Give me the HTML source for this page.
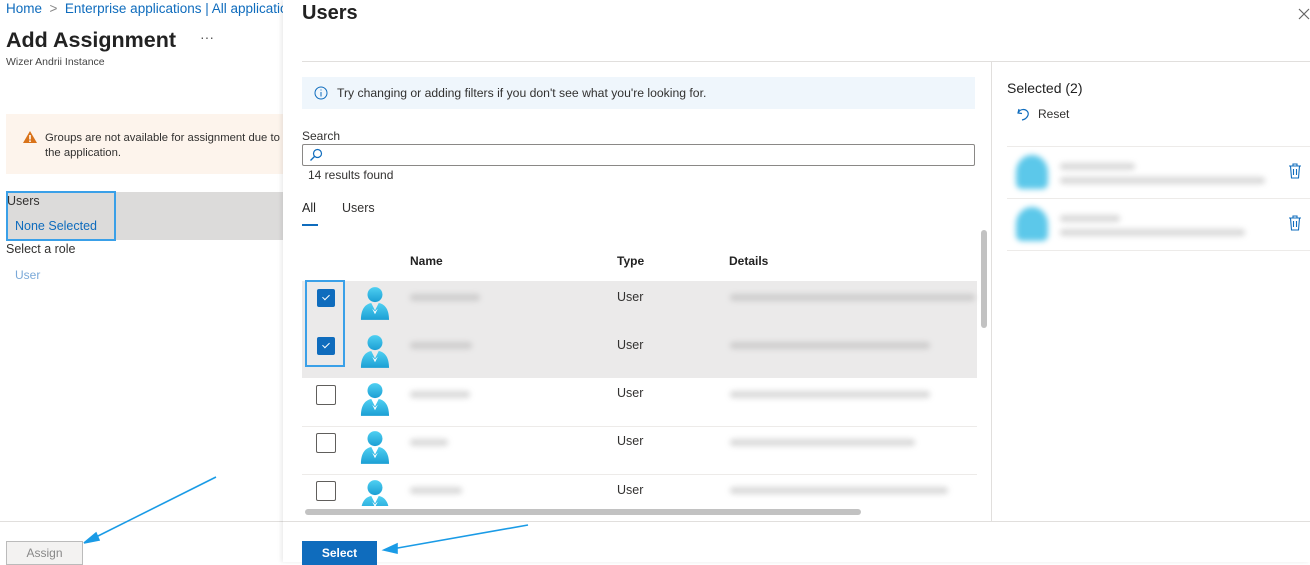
<!DOCTYPE html>
<html><head><meta charset="utf-8"><style>
*{box-sizing:border-box;margin:0;padding:0}
body{width:1310px;height:562px;overflow:hidden;background:#fff;font-family:"Liberation Sans",sans-serif;color:#323130;position:relative;font-size:12.5px}
.a{position:absolute}
.blur{position:absolute;background:#aaa;filter:blur(3px);height:7px;border-radius:3px;opacity:.45}
.cb{position:absolute;width:20px;height:20px;border:1px solid #605e5c;border-radius:2px;background:#fff}
.cb.on{background:#0f6cbd;border-color:#0f6cbd;width:18px;height:18px}
.cb.on:after{content:"";position:absolute;left:6px;top:3px;width:3px;height:6px;border:solid #fff;border-width:0 1.5px 1.5px 0;transform:rotate(45deg)}
.ty{position:absolute;left:617px;font-size:12.5px}
</style></head><body>
<div class="a" style="left:6px;top:1px;font-size:13.5px;color:#0f6cbd;white-space:nowrap">Home &nbsp;<span style="color:#888">&gt;</span>&nbsp; Enterprise applications | All applications</div>
<div class="a" style="left:6px;top:28px;font-size:21.5px;font-weight:bold;color:#222">Add Assignment</div>
<div class="a" style="left:200px;top:29px;font-size:14px;color:#555">···</div>
<div class="a" style="left:6px;top:56px;font-size:10.5px;color:#444">Wizer Andrii Instance</div>
<div class="a" style="left:6px;top:114px;width:280px;height:60px;background:#fdf4ec"></div>
<svg class="a" style="left:22px;top:130px" width="16" height="14"><path d="M8 1L15 13H1Z" fill="#d9731a"/><rect x="7.2" y="5" width="1.6" height="4.5" fill="#fff"/><rect x="7.2" y="10.4" width="1.6" height="1.6" fill="#fff"/></svg>
<div class="a" style="left:45px;top:131px;font-size:11.3px;line-height:15px;white-space:nowrap">Groups are not available for assignment due to y<br>the application.</div>
<div class="a" style="left:6px;top:192px;width:280px;height:48px;background:#dcdbda"></div>
<div class="a" style="left:6px;top:191px;width:110px;height:50px;border:2px solid #3aa0e8"></div>
<div class="a" style="left:7px;top:194px;font-size:12.5px">Users</div>
<div class="a" style="left:15px;top:219px;font-size:12.5px;color:#0f6cbd">None Selected</div>
<div class="a" style="left:6px;top:242px;font-size:12.5px">Select a role</div>
<div class="a" style="left:15px;top:268px;font-size:12px;color:#7aa9d8">User</div>
<div class="a" style="left:0;top:521px;width:284px;height:1px;background:#e1dfdd"></div>
<div class="a" style="left:6px;top:541px;width:77px;height:24px;border:1px solid #bbb;background:#f3f2f1;color:#888;font-size:12px;text-align:center;line-height:22px">Assign</div>
<div class="a" style="left:283px;top:0;width:1027px;height:562px;background:#fff;box-shadow:-2px 0 4px rgba(0,0,0,.08)"></div>
<div class="a" style="left:302px;top:2px;font-size:20px;font-weight:bold;color:#222">Users</div>
<svg class="a" style="left:1298px;top:8px" width="12" height="12"><path d="M1 1L11 11M11 1L1 11" stroke="#666" stroke-width="1.2"/></svg>
<div class="a" style="left:302px;top:61px;width:1008px;height:1px;background:#e1dfdd"></div>
<div class="a" style="left:991px;top:62px;width:1px;height:459px;background:#e1dfdd"></div>
<div class="a" style="left:302px;top:77px;width:673px;height:32px;background:#eff6fc"></div>
<svg class="a" style="left:314px;top:86px" width="14" height="14"><circle cx="7" cy="7" r="6" fill="none" stroke="#0f6cbd" stroke-width="1"/><rect x="6.5" y="6" width="1" height="4.5" fill="#0f6cbd"/><rect x="6.5" y="3.5" width="1" height="1" fill="#0f6cbd"/></svg>
<div class="a" style="left:337px;top:86px;font-size:12.2px">Try changing or adding filters if you don't see what you're looking for.</div>
<div class="a" style="left:302px;top:129px;font-size:12px">Search</div>
<div class="a" style="left:302px;top:144px;width:673px;height:22px;border:1px solid #8a8886;border-radius:2px"></div>
<svg class="a" style="left:309px;top:148px" width="14" height="14"><circle cx="8.5" cy="5.5" r="4" fill="none" stroke="#0f6cbd" stroke-width="1.2"/><path d="M5.5 8.5L1.5 12.5" stroke="#0f6cbd" stroke-width="1.3"/></svg>
<div class="a" style="left:308px;top:168px;font-size:12px">14 results found</div>
<div class="a" style="left:302px;top:201px;font-size:12.5px;color:#222">All</div>
<div class="a" style="left:302px;top:224px;width:16px;height:2px;background:#0f6cbd"></div>
<div class="a" style="left:342px;top:201px;font-size:12.5px">Users</div>
<div class="a" style="left:410px;top:254px;font-size:12px;font-weight:bold;color:#222">Name</div>
<div class="a" style="left:617px;top:254px;font-size:12px;font-weight:bold;color:#222">Type</div>
<div class="a" style="left:729px;top:254px;font-size:12px;font-weight:bold;color:#222">Details</div>
<div class="a" style="left:302px;top:281px;width:675px;height:97px;background:#ebeaea"></div>
<div class="a" style="left:302px;top:426px;width:675px;height:1px;background:#edebe9"></div>
<div class="a" style="left:302px;top:474px;width:675px;height:1px;background:#edebe9"></div>
<div class="a" style="left:305px;top:280px;width:40px;height:87px;border:2px solid #3aa0e8"></div>
<div class="cb on" style="left:317px;top:289px"></div>
<div class="cb on" style="left:317px;top:337px"></div>
<div class="cb" style="left:316px;top:385px"></div>
<div class="cb" style="left:316px;top:433px"></div>
<div class="cb" style="left:316px;top:481px"></div>
<svg width="0" height="0" style="position:absolute"><defs><linearGradient id="g" x1="0" y1="0" x2="0" y2="1"><stop offset="0" stop-color="#4fd0f2"/><stop offset="1" stop-color="#1c9fd4"/></linearGradient>
<symbol id="p" viewBox="0 0 32 36"><circle cx="16" cy="9" r="8" fill="url(#g)"/><path d="M1 36C1 24 6 19 12 18L16 26L20 18C26 19 31 24 31 36Z" fill="url(#g)"/><path d="M13 24L16 30L19 24L16 27Z" fill="#fff"/></symbol></defs></svg>
<div style="position:absolute;left:302px;top:230px;width:675px;height:276px;overflow:hidden">
<svg class="a" style="left:58px;top:56px" width="30" height="34"><use href="#p"/></svg>
<svg class="a" style="left:58px;top:104px" width="30" height="34"><use href="#p"/></svg>
<svg class="a" style="left:58px;top:152px" width="30" height="34"><use href="#p"/></svg>
<svg class="a" style="left:58px;top:200px" width="30" height="34"><use href="#p"/></svg>
<svg class="a" style="left:58px;top:249px" width="30" height="34"><use href="#p"/></svg>
</div>
<div class="blur" style="left:410px;top:294px;width:70px"></div>
<div class="blur" style="left:410px;top:342px;width:62px"></div>
<div class="blur" style="left:410px;top:391px;width:60px"></div>
<div class="blur" style="left:410px;top:439px;width:38px"></div>
<div class="blur" style="left:410px;top:487px;width:52px"></div>
<div class="ty" style="top:290px">User</div>
<div class="ty" style="top:338px">User</div>
<div class="ty" style="top:386px">User</div>
<div class="ty" style="top:434px">User</div>
<div class="ty" style="top:483px">User</div>
<div class="blur" style="left:730px;top:294px;width:245px"></div>
<div class="blur" style="left:730px;top:342px;width:200px"></div>
<div class="blur" style="left:730px;top:391px;width:200px"></div>
<div class="blur" style="left:730px;top:439px;width:185px"></div>
<div class="blur" style="left:730px;top:487px;width:218px"></div>
<div class="a" style="left:981px;top:230px;width:6px;height:98px;background:#c2c2c2;border-radius:3px"></div>
<div class="a" style="left:305px;top:509px;width:556px;height:6px;background:#c2c2c2;border-radius:3px"></div>
<div class="a" style="left:1007px;top:80px;font-size:14px;color:#222">Selected (2)</div>
<svg class="a" style="left:1016px;top:106px" width="14" height="16"><path d="M3 3L2 7L6 7.5M2.5 6.5C4 3 9 2.5 11.5 5.5C13.5 8.5 11 13 6 14" fill="none" stroke="#0f6cbd" stroke-width="1.2"/></svg>
<div class="a" style="left:1038px;top:107px;font-size:12px">Reset</div>
<div class="a" style="left:1007px;top:146px;width:303px;height:1px;background:#edebe9"></div>
<div class="a" style="left:1007px;top:198px;width:303px;height:1px;background:#edebe9"></div>
<div class="a" style="left:1007px;top:250px;width:303px;height:1px;background:#edebe9"></div>
<div class="a" style="left:1016px;top:155px;width:32px;height:34px;background:#5cc8ea;border-radius:50% 50% 6px 6px;filter:blur(3px)"></div>
<div class="a" style="left:1016px;top:207px;width:32px;height:34px;background:#5cc8ea;border-radius:50% 50% 6px 6px;filter:blur(3px)"></div>
<div class="blur" style="left:1060px;top:163px;width:75px"></div>
<div class="blur" style="left:1060px;top:177px;width:205px"></div>
<div class="blur" style="left:1060px;top:215px;width:60px"></div>
<div class="blur" style="left:1060px;top:229px;width:185px"></div>
<svg class="a" style="left:1288px;top:163px" width="14" height="16"><path d="M1 3H13M5 3V1H9V3M2.5 3L3.5 15H10.5L11.5 3M5.5 6V12M8.5 6V12" fill="none" stroke="#0f6cbd" stroke-width="1.1"/></svg>
<svg class="a" style="left:1288px;top:215px" width="14" height="16"><path d="M1 3H13M5 3V1H9V3M2.5 3L3.5 15H10.5L11.5 3M5.5 6V12M8.5 6V12" fill="none" stroke="#0f6cbd" stroke-width="1.1"/></svg>
<div class="a" style="left:283px;top:521px;width:1027px;height:1px;background:#e1dfdd"></div>
<div class="a" style="left:302px;top:541px;width:75px;height:24px;background:#0f6cbd;color:#fff;font-size:12px;font-weight:bold;text-align:center;line-height:24px">Select</div>
<svg class="a" style="left:0;top:0" width="1310" height="562"><g stroke="#1a9be6" stroke-width="1.6" fill="#1a9be6"><path d="M216 477L90 540"/><path d="M84 543L96 533L99 540Z"/><path d="M528 525L392 549"/><path d="M384 550L397 544L397 553Z"/></g></svg>
</body></html>
